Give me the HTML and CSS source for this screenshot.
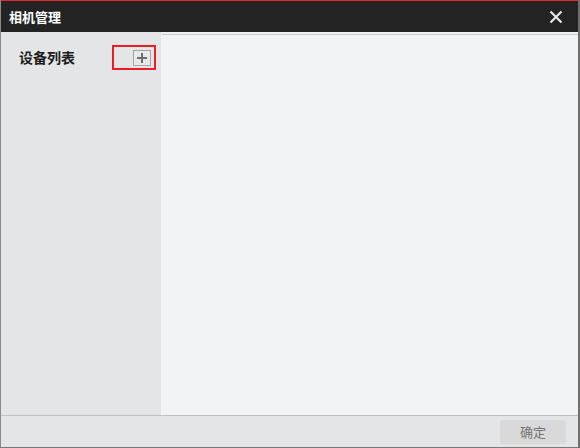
FILE: index.html
```html
<!DOCTYPE html>
<html>
<head>
<meta charset="utf-8">
<link rel="stylesheet" href="styles.css">
</head>
<body>
<div class="dialog">
  <div class="titlebar">
    <span class="title">相机管理</span>
    <svg class="close" width="14" height="14" viewBox="0 0 14 14"><path d="M1.5 1.5L12.5 12.5M12.5 1.5L1.5 12.5" stroke="#e6e6e6" stroke-width="2.2" fill="none"/></svg>
  </div>
  <div class="body">
    <div class="sidebar">
      <div class="side-head">
        <span class="side-title">设备列表</span>
        <div class="add-wrap">
          <div class="add-btn">
            <svg width="12" height="12" viewBox="0 0 12 12"><path d="M6 1V11M1 6H11" stroke="#6e6e6e" stroke-width="2" fill="none"/></svg>
          </div>
        </div>
      </div>
    </div>
    <div class="main">
      <div class="main-line"></div>
    </div>
  </div>
  <div class="footer">
    <button class="ok">确定</button>
  </div>
</div>
</body>
</html>
```
FILE: styles.css
```css
html, body { margin: 0; padding: 0; }
body {
  width: 580px; height: 448px; overflow: hidden;
  font-family: "Microsoft YaHei", "Noto Sans CJK SC", sans-serif;
}
.dialog {
  width: 580px; height: 448px; box-sizing: border-box;
  display: flex; flex-direction: column;
  border-left: 1px solid #8a8a8a;
  border-right: 2px solid #6f6f6f;
  border-bottom: 1px solid #7a7a7a;
  background: #e4e5e6;
}
.titlebar {
  height: 32px; flex: none;
  background: #232323;
  border-top: 1px solid #e8262a;
  box-sizing: border-box;
  display: flex; align-items: center; justify-content: space-between;
  padding: 0 15px 0 8px;
}
.title {
  color: #fff; font-weight: bold; font-size: 13px; line-height: 16px;
}
.close { display: block; margin-top: 1px; }
.body { flex: 1; display: flex; min-height: 0; }
.sidebar {
  width: 160px; flex: none; background: #e4e5e6;
  padding-top: 13px; box-sizing: border-box;
}
.side-head {
  display: flex; align-items: center;
  padding-left: 18px; padding-right: 5px;
}
.side-title {
  font-size: 14px; font-weight: bold; color: #1d1d1d; line-height: 24px;
  margin-top: -1px;
}
.add-wrap {
  margin-left: auto;
  width: 44px; height: 25px; box-sizing: border-box;
  border: 2px solid #ee1c25;
  display: flex; align-items: center; justify-content: flex-end;
  padding-right: 3px;
}
.add-btn {
  width: 18px; height: 16px; box-sizing: border-box;
  border: 1px solid #a6a6a6; background: #e8e8e8;
  display: flex; align-items: center; justify-content: center;
}
.add-btn svg { display: block; }
.main {
  flex: 1; background: #f2f3f5;
  padding-top: 2px; padding-left: 1px;
}
.main-line { height: 1px; background: #c9c9cb; }
.footer {
  height: 32px; flex: none; box-sizing: border-box;
  border-top: 1px solid #c0c0c2;
  background: #e4e5e6;
  display: flex; align-items: center; justify-content: flex-end;
  padding-right: 12px;
}
.ok {
  width: 66px; height: 24px; border: 1px solid #dadada; border-radius: 3px;
  background: #d9d9d9; color: #747474;
  font-family: "Microsoft YaHei", "Noto Sans CJK SC", sans-serif;
  font-size: 13px; padding: 0;
}
```
